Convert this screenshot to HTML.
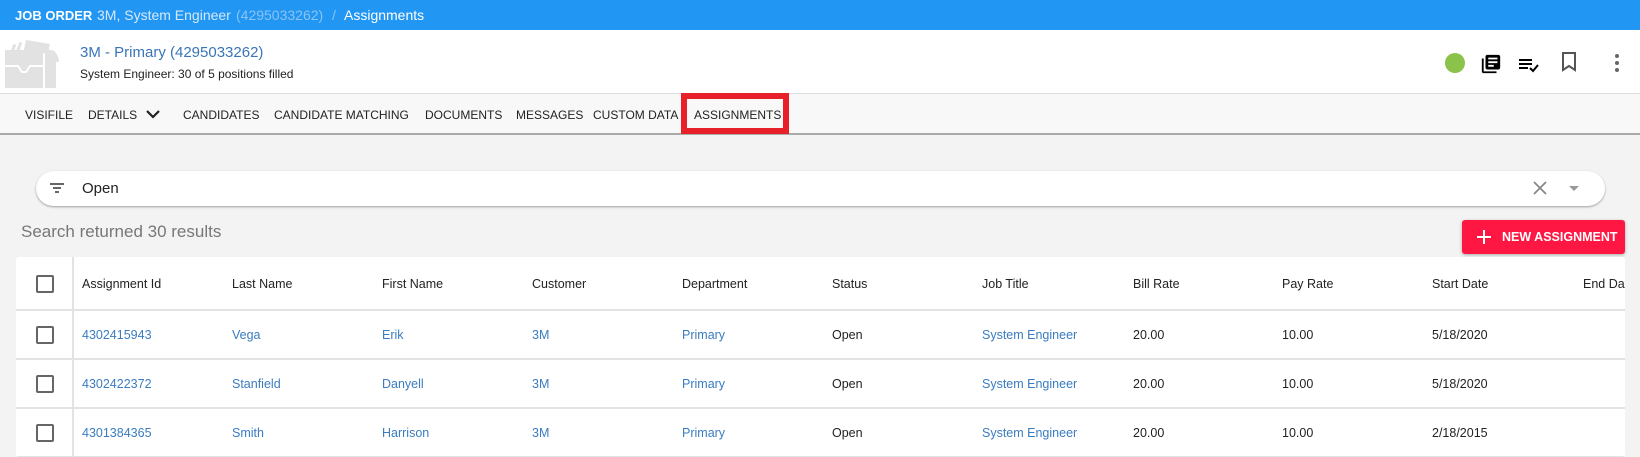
<!DOCTYPE html>
<html><head><meta charset="utf-8"><style>
*{margin:0;padding:0;box-sizing:border-box}
body{width:1640px;height:452px;overflow:hidden;background:#f3f3f3;font-family:"Liberation Sans",Arial,sans-serif;position:relative;color:#222}
.a{position:absolute;white-space:nowrap}
.top{position:absolute;left:0;top:0;width:1640px;height:30px;background:#2196f3}
.hdr{position:absolute;left:0;top:30px;width:1640px;height:64px;background:#fff;border-bottom:1px solid #ddd}
.nav{position:absolute;left:0;top:94px;width:1640px;height:41px;background:#f8f8f8;border-bottom:2px solid #aaa}
.nav span{position:absolute;top:14px;font-size:12px;color:#222;white-space:nowrap}
.tbl{position:absolute;left:16px;top:257px;width:1609px;height:200px;background:#fff;border-radius:3px;overflow:hidden}
.hl{position:absolute;left:0;width:1609px;height:2px;background:#e3e3e3}
.cb{position:absolute;left:20px;width:18px;height:18px;border:2px solid #666;border-radius:2px}
.c{position:absolute;font-size:12.5px;color:#222;white-space:nowrap}
.l{color:#3a7cc0}
</style></head><body>
<div class="top"></div>
<div class="a" style="left:15px;top:8px;font-size:13px;font-weight:bold;color:#fff">JOB ORDER</div>
<div class="a" style="left:97px;top:7px;font-size:14px;color:#d6e9fb">3M, System Engineer</div>
<div class="a" style="left:236px;top:7px;font-size:14px;color:#8cc3f3">(4295033262)</div>
<div class="a" style="left:332px;top:7px;font-size:14px;color:#8cc3f3">/</div>
<div class="a" style="left:344px;top:7px;font-size:14px;color:#fff">Assignments</div>

<div class="hdr"></div>
<svg class="a" style="left:4px;top:36px" width="56" height="52" viewBox="0 0 56 52">
<g fill="#e2e2e2"><rect x="8" y="8" width="3" height="8" transform="rotate(20 9 12)"/><rect x="14" y="6" width="3" height="9" transform="rotate(20 15 10)"/><path d="M22 4 L46 8 L44 18 L20 14Z"/>
<path d="M1 14 H39 V52 H1Z"/><path d="M41 14 H48 Q54 16 55 26 L52 26 V52 H41Z"/></g>
<path d="M1 30 L14 30 L18 36 L22 36 L26 30 L39 30" stroke="#fff" stroke-width="2" fill="none"/>
</svg>
<div class="a" style="left:80px;top:44px;font-size:15px;color:#3a75b8">3M - Primary (4295033262)</div>
<div class="a" style="left:80px;top:67px;font-size:12px;color:#222">System Engineer: 30 of 5 positions filled</div>
<div class="a" style="left:1445px;top:53px;width:20px;height:20px;border-radius:50%;background:#8bc34a"></div>
<svg class="a" style="left:1480px;top:53px" width="22" height="22" viewBox="0 0 24 24"><path d="M4 6H2v14c0 1.1.9 2 2 2h14v-2H4V6zm16-4H8c-1.1 0-2 .9-2 2v12c0 1.1.9 2 2 2h12c1.1 0 2-.9 2-2V4c0-1.1-.9-2-2-2zm-1 9H9V9h10v2zm-4 4H9v-2h6v2zm4-8H9V5h10v2z" fill="#000"/></svg>
<svg class="a" style="left:1516px;top:53px" width="24" height="24" viewBox="0 0 24 24"><path d="M3 6h13v2H3zM3 10h13v2H3zM3 14h9v2H3z" fill="#000"/><path d="M14 15l3 3 5-6" stroke="#000" stroke-width="2" fill="none"/></svg>
<svg class="a" style="left:1559px;top:51px" width="20" height="22" viewBox="0 0 20 22"><path d="M4 2h12v17l-6-4-6 4z" stroke="#555" stroke-width="2" fill="none"/></svg>
<svg class="a" style="left:1612px;top:52px" width="10" height="22"><circle cx="5" cy="4" r="2" fill="#666"/><circle cx="5" cy="11" r="2" fill="#666"/><circle cx="5" cy="18" r="2" fill="#666"/></svg>

<div class="nav">
<span style="left:25px">VISIFILE</span>
<span style="left:88px">DETAILS</span>
<svg style="position:absolute;left:145px;top:14px" width="16" height="12"><path d="M2 3l6 6 6-6" stroke="#222" stroke-width="2.2" fill="none"/></svg>
<span style="left:183px">CANDIDATES</span>
<span style="left:274px">CANDIDATE MATCHING</span>
<span style="left:425px">DOCUMENTS</span>
<span style="left:516px">MESSAGES</span>
<span style="left:593px">CUSTOM DATA</span>
<span style="left:694px">ASSIGNMENTS</span>
</div>
<div class="a" style="left:681px;top:93px;width:108px;height:41px;border:6px solid #e8202a"></div>

<div class="a" style="left:36px;top:171px;width:1569px;height:35px;background:#fff;border-radius:18px;box-shadow:0 1px 2px rgba(0,0,0,.35)"></div>
<svg class="a" style="left:49px;top:181px" width="16" height="14"><path d="M1 3h14M4 7h8M6 11h4" stroke="#333" stroke-width="1.6"/></svg>
<div class="a" style="left:82px;top:180px;font-size:15px;color:#222">Open</div>
<svg class="a" style="left:1532px;top:180px" width="16" height="16"><path d="M2 2l12 12M14 2L2 14" stroke="#888" stroke-width="1.8"/></svg>
<svg class="a" style="left:1569px;top:186px" width="10" height="6"><path d="M0 0h10L5 5z" fill="#999"/></svg>

<div class="a" style="left:21px;top:222px;font-size:17px;color:#777">Search returned 30 results</div>
<div class="a" style="left:1462px;top:220px;width:163px;height:34px;background:#ff1744;border-radius:3px;box-shadow:0 1px 3px rgba(0,0,0,.3)"></div>
<svg class="a" style="left:1476px;top:229px" width="16" height="16"><path d="M8 1v14M1 8h14" stroke="#fff" stroke-width="2"/></svg>
<div class="a" style="left:1502px;top:230px;font-size:12.5px;font-weight:bold;color:#fff">NEW ASSIGNMENT</div>

<div class="tbl">
<div class="a" style="left:56px;top:0;width:2px;height:200px;background:#e3e3e3"></div>
<div class="hl" style="top:52px"></div><div class="hl" style="top:101px"></div><div class="hl" style="top:150px"></div><div class="hl" style="top:199px"></div>
<div class="cb" style="top:18px"></div><div class="cb" style="top:69px"></div><div class="cb" style="top:118px"></div><div class="cb" style="top:167px"></div>
<div class="c" style="left:66px;top:20px">Assignment Id</div><div class="c" style="left:216px;top:20px">Last Name</div><div class="c" style="left:366px;top:20px">First Name</div><div class="c" style="left:516px;top:20px">Customer</div><div class="c" style="left:666px;top:20px">Department</div><div class="c" style="left:816px;top:20px">Status</div><div class="c" style="left:966px;top:20px">Job Title</div><div class="c" style="left:1117px;top:20px">Bill Rate</div><div class="c" style="left:1266px;top:20px">Pay Rate</div><div class="c" style="left:1416px;top:20px">Start Date</div><div class="c" style="left:1567px;top:20px">End Date</div>

<div class="c l" style="left:66px;top:71px">4302415943</div><div class="c l" style="left:216px;top:71px">Vega</div><div class="c l" style="left:366px;top:71px">Erik</div><div class="c l" style="left:516px;top:71px">3M</div><div class="c l" style="left:666px;top:71px">Primary</div><div class="c" style="left:816px;top:71px">Open</div><div class="c l" style="left:966px;top:71px">System Engineer</div><div class="c" style="left:1117px;top:71px">20.00</div><div class="c" style="left:1266px;top:71px">10.00</div><div class="c" style="left:1416px;top:71px">5/18/2020</div>

<div class="c l" style="left:66px;top:120px">4302422372</div><div class="c l" style="left:216px;top:120px">Stanfield</div><div class="c l" style="left:366px;top:120px">Danyell</div><div class="c l" style="left:516px;top:120px">3M</div><div class="c l" style="left:666px;top:120px">Primary</div><div class="c" style="left:816px;top:120px">Open</div><div class="c l" style="left:966px;top:120px">System Engineer</div><div class="c" style="left:1117px;top:120px">20.00</div><div class="c" style="left:1266px;top:120px">10.00</div><div class="c" style="left:1416px;top:120px">5/18/2020</div>

<div class="c l" style="left:66px;top:169px">4301384365</div><div class="c l" style="left:216px;top:169px">Smith</div><div class="c l" style="left:366px;top:169px">Harrison</div><div class="c l" style="left:516px;top:169px">3M</div><div class="c l" style="left:666px;top:169px">Primary</div><div class="c" style="left:816px;top:169px">Open</div><div class="c l" style="left:966px;top:169px">System Engineer</div><div class="c" style="left:1117px;top:169px">20.00</div><div class="c" style="left:1266px;top:169px">10.00</div><div class="c" style="left:1416px;top:169px">2/18/2015</div>
</div>
</body></html>
